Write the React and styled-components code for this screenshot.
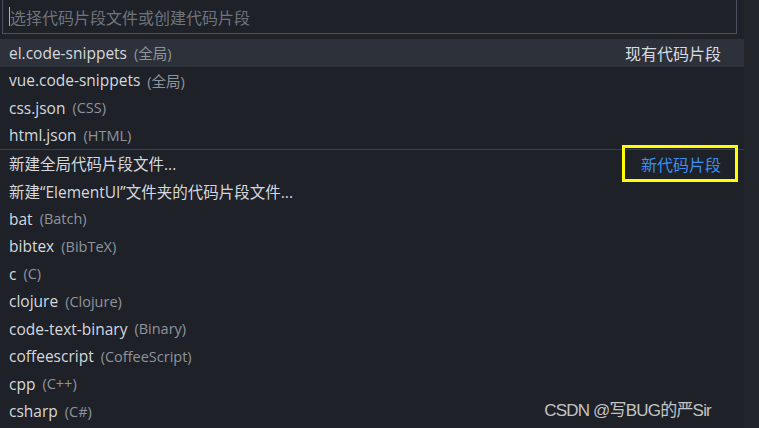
import React from 'react'
import styled, { createGlobalStyle } from 'styled-components'

const Global = createGlobalStyle`
html, body { margin: 0; padding: 0; background: #1e2127; }
body { width: 759px; height: 428px; overflow: hidden; }
`

const Page = styled.div`
position: relative;
display: flex;
width: 759px;
height: 428px;
overflow: hidden;
font-family: "Open Sans", "Noto Sans CJK SC", sans-serif;
`

const Panel = styled.div`
width: 744px;
display: flex;
flex-direction: column;
background: #1e2127;
`

const Track = styled.div`
flex: 1;
background: #22252c;
`

const InputBox = styled.div`
flex-shrink: 0;
margin: -1px 7px 0 2px;
height: 35px;
box-sizing: border-box;
border: 1px solid #4b5160;
display: flex;
align-items: center;
padding-left: 6px;
`

const Caret = styled.span`
width: 1px;
height: 19px;
background: #aeb2b9;
`

const Placeholder = styled.span`
font-size: 16px;
color: #6f747c;
font-family: "Noto Sans CJK SC", sans-serif;
`

const List = styled.div`
flex-shrink: 0;
margin-top: 5px;
display: flex;
flex-direction: column;
`

const Group = styled.div`
flex-shrink: 0;
border-top: ${(p) => (p.first ? 'none' : '1px solid #3c4049')};
`

const Row = styled.div`
height: 27.5px;
display: flex;
align-items: center;
padding: 0 0 0 9px;
background: ${(p) => (p.active ? '#2c313a' : 'transparent')};
`

const Label = styled.span`
font-size: 15.5px;
color: #d5d8de;
white-space: nowrap;
`

const Desc = styled.span`
margin-left: 7px;
font-size: 14.5px;
color: #8f949c;
white-space: nowrap;
`

const Side = styled.span`
margin-left: auto;
margin-right: 23px;
position: relative;
font-size: 16px;
font-family: "Noto Sans CJK SC", sans-serif;
color: ${(p) => (p.blue ? '#3a8ff0' : '#d9dce1')};
${(p) => p.boxed && `
  &::after {
    content: "";
    position: absolute;
    left: -19px;
    right: -17px;
    top: -7px;
    bottom: -6px;
    border: 3px solid #ffff00;
  }
`}
`

const Mark = styled.div`
position: absolute;
right: 48px;
bottom: 7px;
font-family: "Liberation Sans", "Noto Sans CJK SC", sans-serif;
font-size: 17px;
letter-spacing: -0.8px;
color: #c4c4c4;
`

const existing = [
  { name: 'el.code-snippets', desc: '(全局)' },
  { name: 'vue.code-snippets', desc: '(全局)' },
  { name: 'css.json', desc: '(CSS)' },
  { name: 'html.json', desc: '(HTML)' },
]

const langs = [
  { name: 'bat', desc: '(Batch)' },
  { name: 'bibtex', desc: '(BibTeX)' },
  { name: 'c', desc: '(C)' },
  { name: 'clojure', desc: '(Clojure)' },
  { name: 'code-text-binary', desc: '(Binary)' },
  { name: 'coffeescript', desc: '(CoffeeScript)' },
  { name: 'cpp', desc: '(C++)' },
  { name: 'csharp', desc: '(C#)' },
]

const App = () => {
  return (
    <Page>
      <Global />
      <Panel>
        <InputBox>
          <Caret />
          <Placeholder>选择代码片段文件或创建代码片段</Placeholder>
        </InputBox>
        <List>
          <Group first>
            {existing.map((s, i) => (
              <Row key={s.name} active={i === 0}>
                <Label>{s.name}</Label>
                <Desc>{s.desc}</Desc>
                {i === 0 && <Side>现有代码片段</Side>}
              </Row>
            ))}
          </Group>
          <Group>
            <Row>
              <Label>新建全局代码片段文件...</Label>
              <Side blue boxed>新代码片段</Side>
            </Row>
            <Row>
              <Label>新建“ElementUI”文件夹的代码片段文件...</Label>
            </Row>
            {langs.map((s) => (
              <Row key={s.name}>
                <Label>{s.name}</Label>
                <Desc>{s.desc}</Desc>
              </Row>
            ))}
          </Group>
        </List>
      </Panel>
      <Track />
      <Mark>CSDN @写BUG的严Sir</Mark>
    </Page>
  )
}

export default App
